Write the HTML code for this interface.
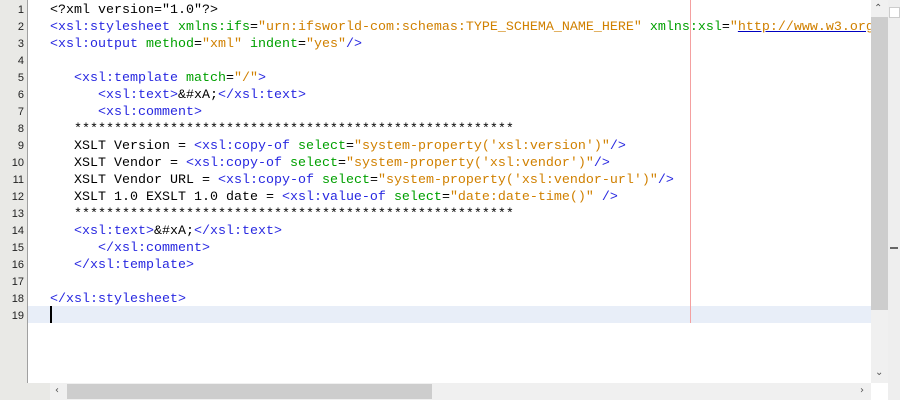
<!DOCTYPE html>
<html><head><style>
body{margin:0;width:900px;height:400px;overflow:hidden;background:#fff;position:relative;font-family:"Liberation Mono",monospace;font-size:13.33px}
#g{position:absolute;left:0;top:0;width:27px;height:383px;background:#e9e9e6;border-right:1px solid #a0a0a0}
.n{position:absolute;left:0;width:24px;text-align:right;font-family:"Liberation Sans",sans-serif;font-size:11px;color:#222;height:17px;line-height:17px}
#c{position:absolute;left:0;top:0;width:871px;height:383px;overflow:hidden}
.l{position:absolute;left:50px;white-space:pre;height:17px;line-height:17px;color:#000}
.t{color:#2828e0}.a{color:#00a000}.v{color:#d08000}
#hl{position:absolute;left:28px;top:306px;width:843px;height:17px;background:#e8eef8}
#red{position:absolute;left:690px;top:0;width:1px;height:323px;background:#f4a0a0}
#vs{position:absolute;left:871px;top:0;width:17px;height:383px;background:#f0f0f0}
#vt{position:absolute;left:871px;top:17px;width:17px;height:293px;background:#cdcdcd}
#rs{position:absolute;left:888px;top:0;width:12px;height:400px;background:#eeeeee}
#hs{position:absolute;left:50px;top:383px;width:821px;height:17px;background:#f0f0f0}
#ht{position:absolute;left:67px;top:384px;width:365px;height:15px;background:#cdcdcd}
#gb{position:absolute;left:0;top:383px;width:50px;height:17px;background:#e9e9e6}
.ar{position:absolute;color:#555;font-family:"DejaVu Sans",sans-serif;font-size:10px}
</style></head><body>
<div id="hl"></div><div id="red"></div>
<div id="g"></div>
<div class="n" style="top:2px">1</div><div class="n" style="top:19px">2</div><div class="n" style="top:36px">3</div><div class="n" style="top:53px">4</div><div class="n" style="top:70px">5</div><div class="n" style="top:87px">6</div><div class="n" style="top:104px">7</div><div class="n" style="top:121px">8</div><div class="n" style="top:138px">9</div><div class="n" style="top:155px">10</div><div class="n" style="top:172px">11</div><div class="n" style="top:189px">12</div><div class="n" style="top:206px">13</div><div class="n" style="top:223px">14</div><div class="n" style="top:240px">15</div><div class="n" style="top:257px">16</div><div class="n" style="top:274px">17</div><div class="n" style="top:291px">18</div><div class="n" style="top:308px">19</div>
<div id="c">
<div class="l" style="top:2px">&lt;?xml version="1.0"?&gt;</div>
<div class="l" style="top:19px"><span class="t">&lt;xsl:stylesheet</span> <span class="a">xmlns:ifs</span>=<span class="v">"urn:ifsworld-com:schemas:TYPE_SCHEMA_NAME_HERE"</span> <span class="a">xmlns:xsl</span>=<span class="v">"<u style="text-decoration-color:#0000c0">http://www.w3.org/1999/XSL/Transform</u>"</span></div>
<div class="l" style="top:36px"><span class="t">&lt;xsl:output</span> <span class="a">method</span>=<span class="v">"xml"</span> <span class="a">indent</span>=<span class="v">"yes"</span><span class="t">/&gt;</span></div>
<div class="l" style="top:70px">   <span class="t">&lt;xsl:template</span> <span class="a">match</span>=<span class="v">"/"</span><span class="t">&gt;</span></div>
<div class="l" style="top:87px">      <span class="t">&lt;xsl:text&gt;</span>&amp;#xA;<span class="t">&lt;/xsl:text&gt;</span></div>
<div class="l" style="top:104px">      <span class="t">&lt;xsl:comment&gt;</span></div>
<div class="l" style="top:121px">   *******************************************************</div>
<div class="l" style="top:138px">   XSLT Version = <span class="t">&lt;xsl:copy-of</span> <span class="a">select</span>=<span class="v">"system-property('xsl:version')"</span><span class="t">/&gt;</span></div>
<div class="l" style="top:155px">   XSLT Vendor = <span class="t">&lt;xsl:copy-of</span> <span class="a">select</span>=<span class="v">"system-property('xsl:vendor')"</span><span class="t">/&gt;</span></div>
<div class="l" style="top:172px">   XSLT Vendor URL = <span class="t">&lt;xsl:copy-of</span> <span class="a">select</span>=<span class="v">"system-property('xsl:vendor-url')"</span><span class="t">/&gt;</span></div>
<div class="l" style="top:189px">   XSLT 1.0 EXSLT 1.0 date = <span class="t">&lt;xsl:value-of</span> <span class="a">select</span>=<span class="v">"date:date-time()"</span> <span class="t">/&gt;</span></div>
<div class="l" style="top:206px">   *******************************************************</div>
<div class="l" style="top:223px">   <span class="t">&lt;xsl:text&gt;</span>&amp;#xA;<span class="t">&lt;/xsl:text&gt;</span></div>
<div class="l" style="top:240px">      <span class="t">&lt;/xsl:comment&gt;</span></div>
<div class="l" style="top:257px">   <span class="t">&lt;/xsl:template&gt;</span></div>
<div class="l" style="top:291px"><span class="t">&lt;/xsl:stylesheet&gt;</span></div>
</div>
<div style="position:absolute;left:50px;top:306px;width:2px;height:17px;background:#000"></div>
<div id="vs"></div><div id="vt"></div><div id="rs"></div>
<div style="position:absolute;left:889px;top:7px;width:9px;height:9px;border:1px solid #ccc;background:#fff"></div>
<div style="position:absolute;left:890px;top:247px;width:8px;height:2px;background:#666"></div>
<div id="gb"></div><div id="hs"></div><div id="ht"></div>
<div class="ar" style="left:874px;top:3px">&#8963;</div>
<div class="ar" style="left:875px;top:367px">&#8964;</div>
<div class="ar" style="left:55px;top:385px">&#8249;</div>
<div class="ar" style="left:860px;top:385px">&#8250;</div>
</body></html>
